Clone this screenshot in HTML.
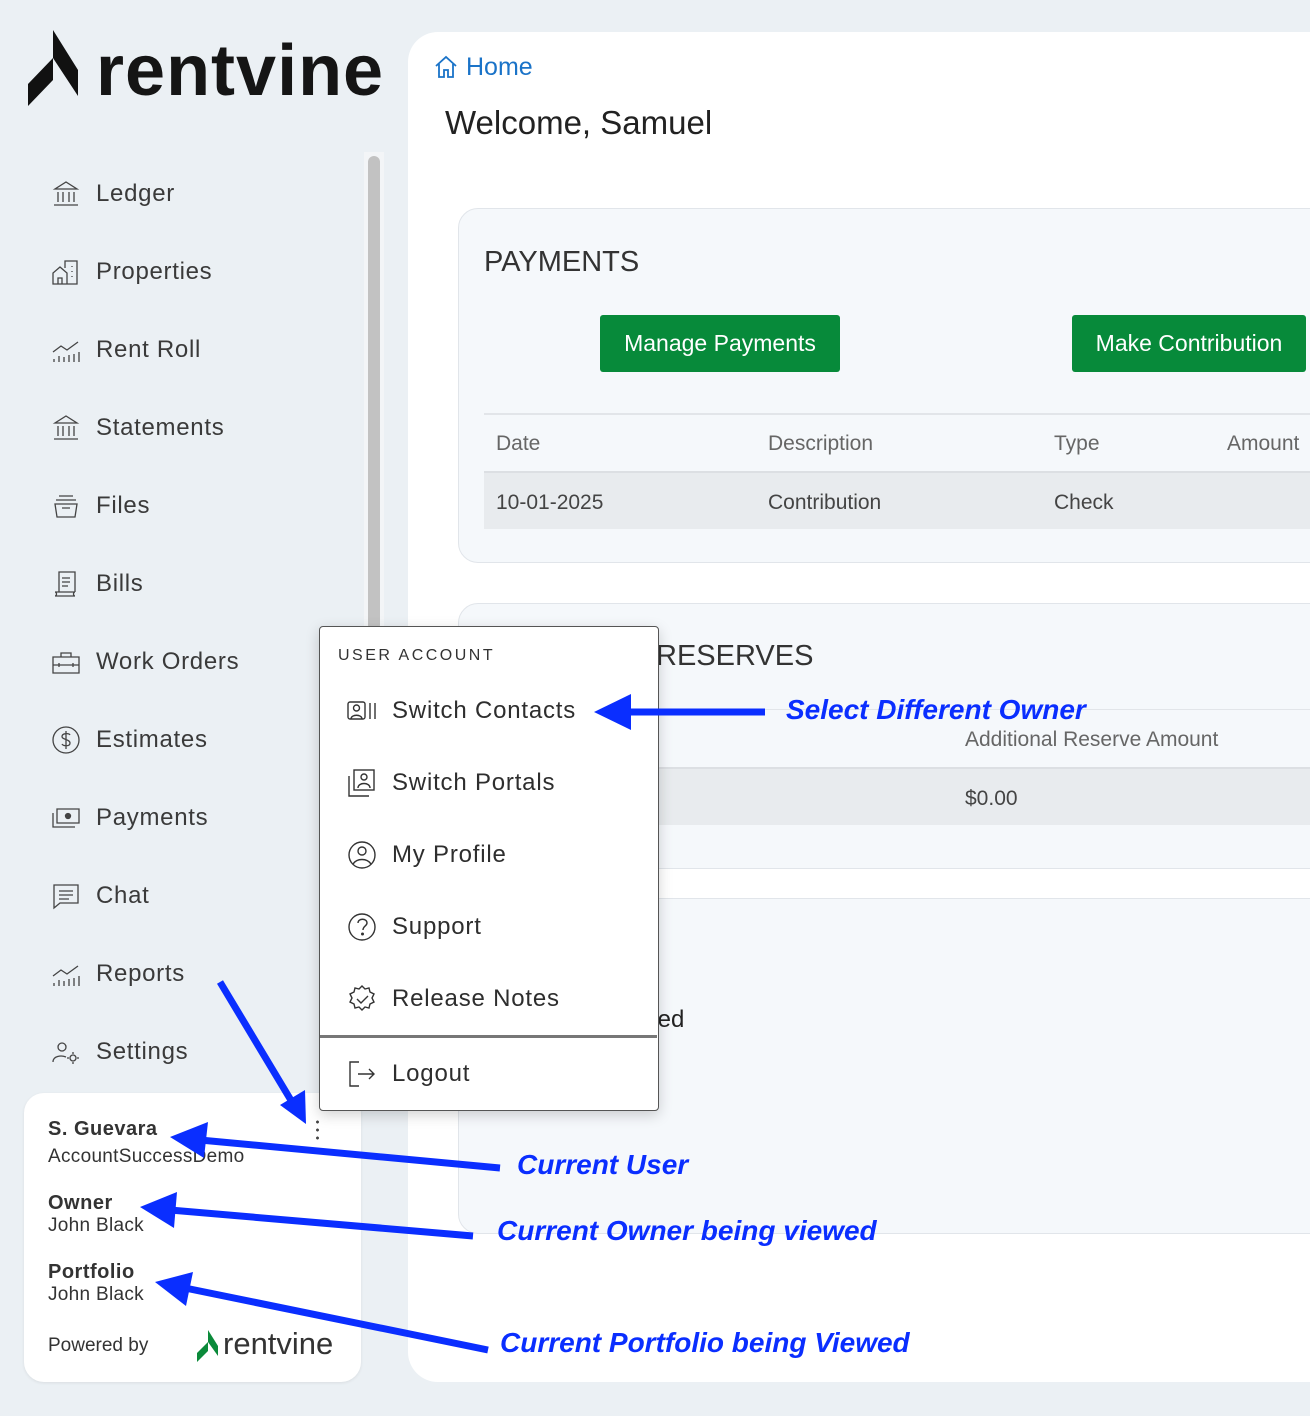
<!DOCTYPE html>
<html><head><meta charset="utf-8"><style>
*{margin:0;padding:0;box-sizing:border-box}
body{width:1310px;height:1416px;background:#ebf0f4;font-family:"Liberation Sans",sans-serif;position:relative;overflow:hidden;color:#333}
.abs{position:absolute}
.nav{position:absolute;left:50px;font-size:24px;color:#3a3a3a;display:flex;align-items:center;height:40px;letter-spacing:.7px}
.nav svg{width:32px;height:32px;margin-right:14px;fill:none;stroke:#444;stroke-width:1.3}
.card{position:absolute;background:#f5f8fb;border:1.5px solid #e1e5ea;border-radius:20px}
.btn{position:absolute;background:#078a3a;color:#fff;font-size:23px;display:flex;align-items:center;justify-content:center;border-radius:3px}
.mi{position:absolute;left:26px;display:flex;align-items:center;font-size:24px;color:#2e2e2e;letter-spacing:.8px}
.mi svg{width:32px;height:32px;margin-right:14px;fill:none;stroke:#333;stroke-width:1.4}
.lbl{position:absolute;color:#0a2eff;font-weight:bold;font-style:italic;font-size:28px}
</style></head><body>

<!-- logo -->
<svg class="abs" style="left:26px;top:28px" width="56" height="80" viewBox="0 0 56 80"><polygon points="27,2 52,42 52,68 27,30" fill="#111"/><polygon points="27,30 27,52 2,78 2,56" fill="#111"/></svg>
<div class="abs" style="left:96px;top:26px;font-size:72px;font-weight:bold;color:#151515;letter-spacing:1px;line-height:90px">rentvine</div>

<!-- scrollbar -->
<div class="abs" style="left:364px;top:152px;width:20px;height:480px;background:#f3f5f7"></div>
<div class="abs" style="left:368px;top:156px;width:12px;height:475px;background:#c2c2c2;border-radius:6px"></div>

<!-- nav -->
<div class="nav" style="top:174px"><svg viewBox="0 0 32 32"><path d="M5 11h22L16 4z M8 14v10M13 14v10M19 14v10M24 14v10M4 27h24"/></svg>Ledger</div>
<div class="nav" style="top:252px"><svg viewBox="0 0 32 32"><path d="M3 28V17l7-6 7 6v11H3zM8 28v-6h4v6M15 12V5h12v23H17M22 10v1M22 15v1M22 20v1"/></svg>Properties</div>
<div class="nav" style="top:330px"><svg viewBox="0 0 32 32"><path d="M3 18l8-6 6 4 11-8M4 28v-3M9 28v-6M14 28v-5M19 28v-7M24 28v-8M29 28v-10"/></svg>Rent Roll</div>
<div class="nav" style="top:408px"><svg viewBox="0 0 32 32"><path d="M5 11h22L16 4z M8 14v10M13 14v10M19 14v10M24 14v10M4 27h24"/></svg>Statements</div>
<div class="nav" style="top:486px"><svg viewBox="0 0 32 32"><path d="M9 6h14M6 10h20M5 14h22l-2 13H7zM12 18h8"/></svg>Files</div>
<div class="nav" style="top:564px"><svg viewBox="0 0 32 32"><path d="M9 24V4h16v20M5 28h20c-2 0-2-4 0-4H5c2 0 2 4 0 4zM12 10h8M12 14h8M12 18h6"/></svg>Bills</div>
<div class="nav" style="top:642px"><svg viewBox="0 0 32 32"><path d="M3 11h26v16H3zM11 11V7h10v4M3 19h26M9 17v4M23 17v4"/></svg>Work Orders</div>
<div class="nav" style="top:720px"><svg viewBox="0 0 32 32"><circle cx="16" cy="16" r="13"/><path d="M20 11c-1-2-8-2-8 1.5S20 15 20 19s-7 3-8 1M16 7v18"/></svg>Estimates</div>
<div class="nav" style="top:798px"><svg viewBox="0 0 32 32"><path d="M7 7h22v14H7zM3 11v14h22"/><circle cx="18" cy="14" r="2.5" fill="#444"/></svg>Payments</div>
<div class="nav" style="top:876px"><svg viewBox="0 0 32 32"><path d="M4 5h24v18H10l-6 5zM9 11h14M9 15h14M9 19h10"/></svg>Chat</div>
<div class="nav" style="top:954px"><svg viewBox="0 0 32 32"><path d="M3 18l8-6 6 4 11-8M4 28v-3M9 28v-6M14 28v-5M19 28v-7M24 28v-8M29 28v-10"/></svg>Reports</div>
<div class="nav" style="top:1032px"><svg viewBox="0 0 32 32"><circle cx="12" cy="11" r="4"/><path d="M3 26c0-6 8-7 13-5"/><circle cx="23" cy="22" r="3"/><path d="M23 16v2M23 26v2M17 22h2M27 22h2"/></svg>Settings</div>

<!-- user card -->
<div class="abs" style="left:24px;top:1093px;width:337px;height:289px;background:#fff;border-radius:20px;box-shadow:0 1px 3px rgba(0,0,0,.08)"></div>
<div class="abs" style="left:48px;top:1118px;font-size:20px;font-weight:bold;color:#333;letter-spacing:.5px">S. Guevara</div>
<div class="abs" style="left:48px;top:1146px;font-size:19px;color:#333;letter-spacing:.3px">AccountSuccessDemo</div>
<div class="abs" style="left:48px;top:1192px;font-size:20px;font-weight:bold;color:#333;letter-spacing:.5px">Owner</div>
<div class="abs" style="left:48px;top:1215px;font-size:19px;color:#333;letter-spacing:.3px">John Black</div>
<div class="abs" style="left:48px;top:1261px;font-size:20px;font-weight:bold;color:#333;letter-spacing:.5px">Portfolio</div>
<div class="abs" style="left:48px;top:1284px;font-size:19px;color:#333;letter-spacing:.3px">John Black</div>
<div class="abs" style="left:48px;top:1335px;font-size:19px;color:#333">Powered by</div>
<svg class="abs" style="left:196px;top:1330px" width="24" height="32" viewBox="0 0 24 32"><polygon points="12,0 22,16 22,26 12,12" fill="#0b8a3a"/><polygon points="12,12 12,21 1,32 1,23" fill="#0b8a3a"/></svg>
<div class="abs" style="left:223px;top:1326px;font-size:31px;color:#333;letter-spacing:0px">rentvine</div>
<div class="abs" style="left:316px;top:1118px;width:3px;height:22px;background:radial-gradient(circle,#444 1.3px,transparent 1.6px) 0 0/3px 8px"></div>

<!-- main panel -->
<div class="abs" style="left:408px;top:32px;width:940px;height:1350px;background:#fff;border-radius:30px"></div>
<svg class="abs" style="left:433px;top:54px" width="26" height="26" viewBox="0 0 26 26" fill="none" stroke="#1a73c8" stroke-width="1.8"><path d="M3 12L13 3l10 9M6 10v13h5v-7h4v7h5V10"/></svg>
<div class="abs" style="left:466px;top:53px;font-size:25px;color:#1a73c8">Home</div>
<div class="abs" style="left:445px;top:104px;font-size:33px;color:#222">Welcome, Samuel</div>

<div class="card" style="left:458px;top:208px;width:900px;height:355px"></div>
<div class="abs" style="left:484px;top:246px;font-size:29px;color:#333">PAYMENTS</div>
<div class="btn" style="left:600px;top:315px;width:240px;height:57px">Manage Payments</div>
<div class="btn" style="left:1072px;top:315px;width:234px;height:57px">Make Contribution</div>
<div class="abs" style="left:484px;top:413px;width:830px;height:2px;background:#e2e5e9"></div>
<div class="abs" style="left:496px;top:432px;font-size:21px;color:#666">Date</div>
<div class="abs" style="left:768px;top:432px;font-size:21px;color:#666">Description</div>
<div class="abs" style="left:1054px;top:432px;font-size:21px;color:#666">Type</div>
<div class="abs" style="left:1227px;top:432px;font-size:21px;color:#666">Amount</div>
<div class="abs" style="left:484px;top:471px;width:830px;height:58px;background:#e8ebee;border-top:2px solid #dcdfe3"></div>
<div class="abs" style="left:496px;top:491px;font-size:21px;color:#444">10-01-2025</div>
<div class="abs" style="left:768px;top:491px;font-size:21px;color:#444">Contribution</div>
<div class="abs" style="left:1054px;top:491px;font-size:21px;color:#444">Check</div>

<div class="card" style="left:458px;top:603px;width:900px;height:266px"></div>
<div class="abs" style="left:656px;top:640px;font-size:29px;color:#333">RESERVES</div>
<div class="abs" style="left:620px;top:709px;width:700px;height:1px;background:#e2e5e9"></div>
<div class="abs" style="left:965px;top:728px;font-size:21px;color:#666">Additional Reserve Amount</div>
<div class="abs" style="left:620px;top:767px;width:700px;height:58px;background:#e8ebee;border-top:2px solid #dcdfe3"></div>
<div class="abs" style="left:965px;top:787px;font-size:21px;color:#444">$0.00</div>

<div class="card" style="left:458px;top:898px;width:900px;height:336px"></div>
<div class="abs" style="left:651px;top:1006px;font-size:24px;color:#222">ted</div>

<!-- dropdown -->
<div class="abs" style="left:319px;top:626px;width:340px;height:485px;background:#fff;border:1.5px solid #555;border-radius:4px;box-shadow:0 4px 14px rgba(0,0,0,.18)">
 <div class="abs" style="left:18px;top:20px;font-size:16px;letter-spacing:2.5px;color:#333">USER ACCOUNT</div>
 <div class="mi" style="top:68px"><svg viewBox="0 0 32 32"><rect x="2" y="7" width="17" height="17" rx="2"/><circle cx="10.5" cy="13" r="3"/><path d="M5 24c0-5 11-5 11 0M24 8v16M29 8v16"/></svg>Switch Contacts</div>
 <div class="mi" style="top:140px"><svg viewBox="0 0 32 32"><rect x="8" y="3" width="20" height="20"/><circle cx="18" cy="10" r="3"/><path d="M12 21c0-6 12-6 12 0M3 9v20h20"/></svg>Switch Portals</div>
 <div class="mi" style="top:212px"><svg viewBox="0 0 32 32"><circle cx="16" cy="16" r="13"/><circle cx="16" cy="12" r="4"/><path d="M7 25c4-6 14-6 18 0"/></svg>My Profile</div>
 <div class="mi" style="top:284px"><svg viewBox="0 0 32 32"><circle cx="16" cy="16" r="13"/><path d="M12 12c0-5 9-5 9 0 0 3-4 3-4 7"/><circle cx="16.5" cy="23" r=".8" fill="#333"/></svg>Support</div>
 <div class="mi" style="top:356px"><svg viewBox="0 0 32 32"><path d="M16 3l3 3 4-1 1 4 4 2-2 4 2 4-4 2-1 4-4-1-3 3-3-3-4 1-1-4-4-2 2-4-2-4 4-2 1-4 4 1z M11 16l4 4 7-7"/></svg>Release Notes</div>
 <div class="abs" style="left:0;top:408px;width:337px;height:3px;background:#777"></div>
 <div class="mi" style="top:431px"><svg viewBox="0 0 32 32"><path d="M13 4H4v24h9M12 16h16M23 11l5 5-5 5"/></svg>Logout</div>
</div>

<!-- annotations -->
<svg class="abs" style="left:0;top:0" width="1310" height="1416" viewBox="0 0 1310 1416">
<g stroke="#0a2eff" stroke-width="7" fill="#0a2eff">
<line x1="765" y1="712" x2="625" y2="712"/><polygon points="594,712 631,694 631,730" stroke="none"/>
<line x1="220" y1="982" x2="292" y2="1102"/><polygon points="306,1124 280,1105 305,1090" stroke="none"/>
<line x1="500" y1="1168" x2="200" y2="1140"/><polygon points="170,1137 208,1122 204,1158" stroke="none"/>
<line x1="473" y1="1236" x2="170" y2="1210"/><polygon points="140,1207 177,1192 174,1228" stroke="none"/>
<line x1="488" y1="1350" x2="185" y2="1288"/><polygon points="155,1282 193,1272 186,1306" stroke="none"/>
</g></svg>
<div class="lbl" style="left:786px;top:694px">Select Different Owner</div>
<div class="lbl" style="left:517px;top:1149px">Current User</div>
<div class="lbl" style="left:497px;top:1215px">Current Owner being viewed</div>
<div class="lbl" style="left:500px;top:1327px">Current Portfolio being Viewed</div>
</body></html>
